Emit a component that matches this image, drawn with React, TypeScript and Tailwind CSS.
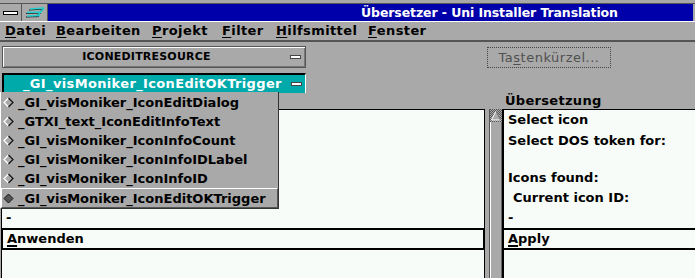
import React from "react";

const F = { fontFamily: '"DejaVu Sans", Verdana, sans-serif' };

function Diamond({ filled }: { filled?: boolean }) {
  return (
    <svg width="11" height="11" viewBox="0 0 11 11" className="shrink-0">
      {filled ? (
        <polygon points="5.5,1 10,5.5 5.5,10 1,5.5" fill="#555" stroke="#111" strokeWidth="1" />
      ) : (
        <>
          <polyline points="5.5,1 1,5.5 5.5,10" fill="none" stroke="#ffffff" strokeWidth="1.2" />
          <polyline points="5.5,1 10,5.5 5.5,10" fill="none" stroke="#111" strokeWidth="1.2" />
        </>
      )}
    </svg>
  );
}

function Dash() {
  return <div className="w-[11px] h-[4px] bg-white border border-[#444] shrink-0" />;
}

const items = [
  "_GI_visMoniker_IconEditDialog",
  "_GTXI_text_IconEditInfoText",
  "_GI_visMoniker_IconInfoCount",
  "_GI_visMoniker_IconInfoIDLabel",
  "_GI_visMoniker_IconInfoID",
];

const menus: [string, string, string][] = [
  ["D", "atei", "w-[51px]"],
  ["B", "earbeiten", "w-[96px]"],
  ["P", "rojekt", "w-[70px]"],
  ["F", "ilter", "w-[54px]"],
  ["H", "ilfsmittel", "w-[92px]"],
  ["F", "enster", "w-[70px]"],
];

export default function App() {
  return (
    <div
      className="relative w-[695px] h-[278px] overflow-hidden bg-[#a9a9a9] flex flex-col text-[13px] font-bold text-black"
      style={F}
    >
      {/* top frame */}
      <div className="h-[4px] border-b border-[#555] shrink-0" />
      {/* title bar */}
      <div className="h-[17px] flex shrink-0">
        <div className="w-[22px] flex items-center justify-center border-r border-[#555]">
          <div className="w-[15px] h-[4px] bg-white border border-black" />
        </div>
        <div className="w-[26px] flex items-center justify-center border-r border-[#555]">
          <svg width="24" height="15" viewBox="0 0 24 15">
            <g stroke="#222" strokeWidth="1.2" fill="none">
              <line x1="6" y1="5" x2="20" y2="4" />
              <line x1="3" y1="8.5" x2="18" y2="8" />
              <line x1="3" y1="12" x2="16" y2="11.5" />
              <line x1="20" y1="4" x2="13" y2="12" />
            </g>
            <g stroke="#22d0d0" strokeWidth="1.4" fill="none">
              <line x1="7" y1="4" x2="21" y2="3" />
              <line x1="4" y1="7.5" x2="19" y2="7" />
              <line x1="4" y1="11" x2="17" y2="10.5" />
              <line x1="21" y1="3" x2="14" y2="11" />
            </g>
          </svg>
        </div>
        <div className="flex-1 bg-[#0000aa] text-white flex items-center pl-[313px] leading-[17px] text-[12.5px] tracking-[-0.1px]">
          Übersetzer - Uni Installer Translation
        </div>
        <div className="w-[2px]" />
      </div>
      <div className="h-[1px] bg-white shrink-0" />
      {/* menu bar */}
      <div className="h-[18px] flex items-center leading-[18px] shrink-0 pl-[5px] tracking-[0.4px]">
        {menus.map(([a, b, w], i) => (
          <div key={i} className={w + " shrink-0"}>
            <span className="underline underline-offset-[2px] decoration-1">{a}</span>
            {b}
          </div>
        ))}
      </div>
      <div className="h-[2px] bg-[#555] shrink-0" />

      {/* content */}
      <div className="flex-1 flex flex-col">
        <div className="flex mt-[4px] h-[22px] shrink-0">
          <div className="ml-[2px] w-[304px] h-[22px] border border-[#555] shadow-[inset_1px_1px_0_#fff,inset_-1px_-1px_0_#777] flex items-center relative">
            <div className="flex-1 text-center text-[11px] leading-[20px] tracking-[0.2px]">ICONEDITRESOURCE</div>
            <div className="pr-[4px]">
              <Dash />
            </div>
          </div>
          <div className="ml-[181px] mt-[1px] w-[124px] h-[21px] border border-dotted border-[#444] flex items-center justify-center text-[13px] font-normal text-[#505050] leading-[19px] tracking-[0.5px]">
            Ta<span className="underline underline-offset-[2px]">s</span>tenkürzel...
          </div>
        </div>
        <div className="ml-[2px] mt-[5px] w-[304px] h-[20px] bg-[#00aaaa] border-t-2 border-l-2 border-black border-r border-r-white flex items-center text-white shrink-0">
          <div className="flex-1 pl-[19px] leading-[18px] tracking-[0.35px]">_GI_visMoniker_IconEditOKTrigger</div>
          <div className="pr-[3px]">
            <Dash />
          </div>
        </div>
        <div className="h-[16px] leading-[16px] pl-[505px] shrink-0 tracking-[0.3px]">Übersetzung</div>

        {/* panels */}
        <div className="flex-1 flex">
          <div className="ml-[1px] w-[484px] bg-[#f8fcf8] border-t border-l border-r border-black flex flex-col">
            <div className="h-[98px]" />
            <div className="h-[20px] leading-[20px] pl-[4px]">-</div>
            <div className="h-[22px] border-2 border-black -ml-[1px] -mr-[1px] leading-[18px] pl-[4px]">
              <span className="underline underline-offset-[2px] decoration-[1.5px]">A</span>nwenden
            </div>
          </div>
          <div className="w-[4px]" />
          <div className="w-[13px] flex flex-col border-l border-[#555]">
            <svg width="12" height="13" viewBox="0 0 12 13" className="shrink-0">
              <defs>
                <pattern id="h" width="2" height="2" patternUnits="userSpaceOnUse">
                  <rect width="2" height="2" fill="#a9a9a9" />
                  <rect width="1" height="1" fill="#555" />
                  <rect x="1" y="1" width="1" height="1" fill="#555" />
                </pattern>
              </defs>
              <rect width="12" height="13" fill="url(#h)" />
              <polygon points="6,2 10.5,11 1.5,11" fill="#a9a9a9" stroke="#fff" strokeWidth="1" />
              <line x1="6" y1="2" x2="10.5" y2="11" stroke="#555" strokeWidth="1" />
            </svg>
            <div className="flex-1 bg-[#a9a9a9] border-l border-white border-r border-r-[#666]" />
          </div>
          <div className="flex-1 bg-[#f8fcf8] border-t border-black border-l-2 flex flex-col">
            <div className="h-[21px] leading-[20px] pl-[4px]">Select icon</div>
            <div className="h-[19px] leading-[20px] pl-[4px]">Select DOS token for:</div>
            <div className="h-[18px]" />
            <div className="h-[20px] leading-[20px] pl-[4px]">Icons found:</div>
            <div className="h-[20px] leading-[20px] pl-[9px]">Current icon ID:</div>
            <div className="h-[20px] leading-[20px] pl-[4px]">-</div>
            <div className="h-[22px] border-y-2 border-black leading-[18px] pl-[4px]">
              <span className="underline underline-offset-[2px] decoration-[1.5px]">A</span>pply
            </div>
          </div>
        </div>
      </div>

      {/* dropdown list overlay */}
      <div className="absolute left-0 top-[92px] w-[279px] h-[117px] bg-[#a9a9a9] border-l border-white border-r border-r-[#333] border-b border-b-[#333] pt-[1px] flex flex-col">
        {items.map((t) => (
          <div key={t} className="h-[19px] flex items-center gap-[4px] pl-[2px] leading-[19px]">
            <Diamond />
            <span>{t}</span>
          </div>
        ))}
        <div className="h-[20px] flex items-center gap-[4px] pl-[1px] leading-[19px] border-t border-l border-white border-r border-b border-r-[#555] border-b-[#555]">
          <Diamond filled />
          <span>_GI_visMoniker_IconEditOKTrigger</span>
        </div>
      </div>
    </div>
  );
}
